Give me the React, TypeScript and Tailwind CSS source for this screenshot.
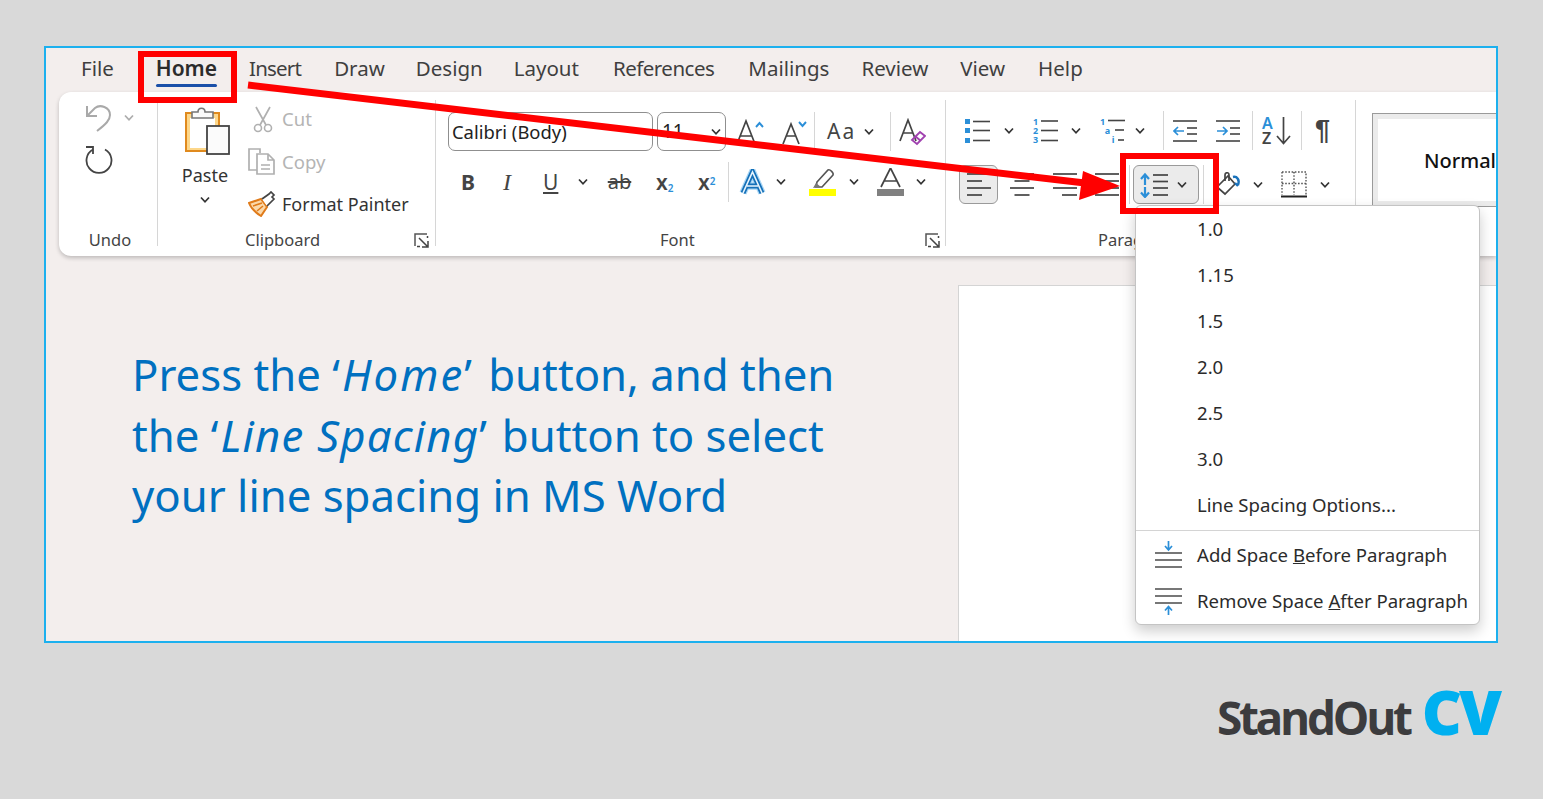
import React from "react";

const G = "#444444";
const B = "#2b8fd8";

function Chev({ ml = "" }: { ml?: string }) {
  return (
    <svg width="12" height="8" viewBox="0 0 12 8" className={`shrink-0 ${ml}`}>
      <path d="M2 1.5 L6 5.8 L10 1.5" fill="none" stroke="#333" strokeWidth="1.7" />
    </svg>
  );
}

function Sep({ className = "" }: { className?: string }) {
  return <div className={`w-px bg-[#d6d6d6] shrink-0 ${className}`} />;
}

function Launcher() {
  return (
    <svg width="15" height="15" viewBox="0 0 15 15" className="shrink-0">
      <path d="M1 13 V1 H13" fill="none" stroke="#555" strokeWidth="1.5" />
      <path d="M14 14 L5 5 M14 8 V14 H8 M3 13.5 H6 M13.5 3 V5" fill="none" stroke="#444" strokeWidth="1.5" />
    </svg>
  );
}

function Lines({ w, x = 0, ys, stroke = G, sw = 1.6 }: { w: number; x?: number; ys: number[]; stroke?: string; sw?: number }) {
  return (
    <>
      {ys.map((y) => (
        <path key={y} d={`M${x} ${y} H${x + w}`} stroke={stroke} strokeWidth={sw} fill="none" />
      ))}
    </>
  );
}

function Bullets({ ml }: { ml: string }) {
  return (
    <svg width="25" height="26" viewBox="0 0 25 26" className={`shrink-0 ${ml}`}>
      <rect x="0" y="1" width="5" height="5" fill={B} />
      <rect x="0" y="10" width="5" height="5" fill={B} />
      <rect x="0" y="20" width="5" height="5" fill={B} />
      <Lines w={17} x={8} ys={[3.5, 12.5, 22.5]} />
    </svg>
  );
}

function Stack({ text, lines, ml }: { text: string; lines: [number, number, number][]; ml: string }) {
  return (
    <div className={`relative shrink-0 w-[25px] h-[28px] ${ml}`}>
      <div className="whitespace-pre text-[9px] leading-[9.3px] font-bold text-[#2b8fd8]">{text}</div>
      <svg width="25" height="28" viewBox="0 0 25 28" className="absolute left-0 top-0">
        {lines.map(([x, l, y]) => (
          <path key={y} d={`M${x} ${y} H${x + l}`} stroke={G} strokeWidth="1.6" fill="none" />
        ))}
      </svg>
    </div>
  );
}

function Indent({ ml, out }: { ml: string; out?: boolean }) {
  return (
    <svg width="25" height="26" viewBox="0 0 25 26" className={`shrink-0 ${ml}`}>
      <Lines w={24} ys={[3, 23]} />
      <Lines w={10} x={14} ys={[10, 16]} />
      {out ? (
        <path d="M11 13 H1 M5 9 L1 13 L5 17" stroke={B} strokeWidth="1.7" fill="none" />
      ) : (
        <path d="M1 13 H11 M7 9 L11 13 L7 17" stroke={B} strokeWidth="1.7" fill="none" />
      )}
    </svg>
  );
}

function Sort({ ml }: { ml: string }) {
  return (
    <div className={`flex items-center shrink-0 w-[29px] h-[30px] ${ml}`}>
      <div className="flex flex-col w-[14px] text-[16px] leading-[15px] font-semibold">
        <span className="text-[#2b8fd8]">A</span>
        <span className="text-[#444]">Z</span>
      </div>
      <svg width="15" height="30" viewBox="0 0 15 30" className="shrink-0">
        <path d="M7.5 1 V27 M1 20 L7.5 27.5 L14 20" stroke={G} strokeWidth="1.7" fill="none" />
      </svg>
    </div>
  );
}

function Align({ kind, ml = "" }: { kind: "l" | "c" | "r" | "j"; ml?: string }) {
  const rows = [
    { l: 24, s: 0 },
    { l: 15, s: 1 },
    { l: 24, s: 2 },
    { l: 15, s: 3 },
  ];
  return (
    <svg width="24" height="25" viewBox="0 0 24 25" className={`shrink-0 ${ml}`}>
      {rows.map((r) => {
        const len = kind === "j" ? 24 : r.l;
        const x = kind === "l" || kind === "j" ? 0 : kind === "c" ? (24 - len) / 2 : 24 - len;
        const y = 2 + r.s * 7;
        return <path key={r.s} d={`M${x} ${y} H${x + len}`} stroke={G} strokeWidth="1.7" fill="none" />;
      })}
    </svg>
  );
}

function LineSpacing() {
  return (
    <svg width="29" height="26" viewBox="0 0 29 26" className="shrink-0">
      <path d="M6 13 V2.5 M2 7 L6 2.5 L10 7 M6 15 V25 M2 20.5 L6 25 L10 20.5" stroke={B} strokeWidth="2.2" fill="none" />
      <Lines w={15} x={14} ys={[3, 9.5, 16, 23]} sw={1.7} />
    </svg>
  );
}

function Menu1() {
  return (
    <svg width="27" height="28" viewBox="0 0 27 28" className="shrink-0">
      <path d="M13.5 0 V8 M10 5 L13.5 9 L17 5" stroke={B} strokeWidth="1.7" fill="none" />
      <Lines w={27} ys={[12, 19, 26]} stroke="#555" sw={1.6} />
    </svg>
  );
}

function Menu2() {
  return (
    <svg width="27" height="28" viewBox="0 0 27 28" className="shrink-0">
      <Lines w={27} ys={[2, 9, 16]} stroke="#555" sw={1.6} />
      <path d="M13.5 28 V20 M10 23.5 L13.5 19.5 L17 23.5" stroke={B} strokeWidth="1.7" fill="none" />
    </svg>
  );
}

function UndoIcon() {
  return (
    <svg width="26" height="28" viewBox="0 0 26 28" className="shrink-0">
      <path d="M1 2 V12 H11 M1 12 L9 4 C14 0 24 3 24 11 C24 16 20 20 11 27" fill="none" stroke="#a9a9a9" strokeWidth="2" />
    </svg>
  );
}

function RedoIcon() {
  return (
    <svg width="28" height="28" viewBox="0 0 28 28" className="shrink-0">
      <path d="M8 3.5 A12.5 12.5 0 1 0 20 3.5" fill="none" stroke={G} strokeWidth="1.8" />
      <path d="M1 1 H8 V8" fill="none" stroke={G} strokeWidth="1.8" />
    </svg>
  );
}

function PasteIcon() {
  return (
    <svg width="47" height="49" viewBox="0 0 47 49" className="shrink-0 ml-[3px]">
      <rect x="3" y="7" width="33" height="38" fill="#fdd78a" stroke="#e08a1e" strokeWidth="2" />
      <rect x="7" y="12" width="25" height="30" fill="#ffffff" />
      <path d="M9 12 V6 H15 C15 1 22 1 22 6 H30 V12 Z" fill="#fafafa" stroke="#777" strokeWidth="1.6" />
      <rect x="24" y="20" width="22" height="28" fill="#fbfbfb" stroke="#444" strokeWidth="1.8" />
    </svg>
  );
}

function CutIcon() {
  return (
    <svg width="20" height="27" viewBox="0 0 20 27" className="shrink-0">
      <path d="M3 1 L13 19 M17 1 L7 19" stroke="#b0b0b0" strokeWidth="1.7" fill="none" />
      <circle cx="5" cy="22" r="3.5" fill="none" stroke="#b0b0b0" strokeWidth="1.6" />
      <circle cx="15" cy="22" r="3.5" fill="none" stroke="#b0b0b0" strokeWidth="1.6" />
    </svg>
  );
}

function CopyIcon() {
  return (
    <svg width="27" height="27" viewBox="0 0 27 27" className="shrink-0">
      <path d="M9 22 H1 V1 H12 V5" fill="#fff" stroke="#b0b0b0" strokeWidth="1.7" />
      <path d="M9 6 H20 L26 12 V26 H9 Z M20 6 V12 H26 M13 17 H22 M13 21 H22" fill="#fff" stroke="#b0b0b0" strokeWidth="1.7" />
    </svg>
  );
}

function PainterIcon() {
  return (
    <svg width="28" height="26" viewBox="0 0 28 26" className="shrink-0">
      <path d="M1 12 L13 8 L19 16 L13 25 C8 22 3 17 1 12 Z" fill="#fbd9ab" stroke="#e07b1a" strokeWidth="2" />
      <path d="M5 15 L14 12 M9 20 L15 15" stroke="#e07b1a" strokeWidth="1.6" />
      <path d="M14 8 L21 3 L23 1 L26 4 L24 6 L26 8 L19 15" fill="#fff" stroke="#444" strokeWidth="1.7" />
    </svg>
  );
}

function GrowIcon({ ml, up }: { ml: string; up?: boolean }) {
  return (
    <svg width={up ? 28 : 25} height="26" viewBox={up ? "0 0 28 26" : "0 0 25 26"} className={`shrink-0 ${ml}`}>
      <path d={up ? "M1 25 L10 2 L19 25 M4.5 17 H15.5" : "M1 25 L9 5 L17 25 M4.5 17 H13.5"} fill="none" stroke="#444" strokeWidth="1.7" />
      {up ? (
        <path d="M20 8 L23.5 4 L27 8" fill="none" stroke={B} strokeWidth="1.9" />
      ) : (
        <path d="M17 3 L20.5 7 L24 3" fill="none" stroke={B} strokeWidth="1.9" />
      )}
    </svg>
  );
}

function ClearIcon({ ml }: { ml: string }) {
  return (
    <svg width="27" height="28" viewBox="0 0 27 28" className={`shrink-0 ${ml}`}>
      <path d="M1 23 L9 2 L17 23 M4 15 H14" fill="none" stroke="#444" strokeWidth="1.7" />
      <path d="M13 22 L21 14 L26 18 L18 26 Z M16.5 18.5 L22 23" fill="none" stroke="#a142b0" strokeWidth="1.9" />
    </svg>
  );
}

function TextEffect({ ml }: { ml: string }) {
  const d = "M4 24 L13.5 3 L23 24 M8 17 H19";
  return (
    <svg width="27" height="27" viewBox="0 0 27 27" className={`shrink-0 ${ml}`}>
      <path d={d} fill="none" stroke="#a9d6f5" strokeWidth="7.5" />
      <path d={d} fill="none" stroke="#1570b8" strokeWidth="5" />
      <path d={d} fill="none" stroke="#e9f5fd" strokeWidth="1.6" />
    </svg>
  );
}

function Highlight({ ml }: { ml: string }) {
  return (
    <svg width="27" height="28" viewBox="0 0 27 28" className={`shrink-0 ${ml}`}>
      <path d="M8 14 L19 2 C21 1 25 5 24 7 L13 19 L7 19 Z" fill="#fff" stroke="#555" strokeWidth="1.6" />
      <path d="M7 15 L12 19 L4 20 Z" fill="#777" />
      <rect x="0" y="21" width="27" height="7" fill="#ffff00" />
    </svg>
  );
}

function FontColor({ ml }: { ml: string }) {
  return (
    <svg width="27" height="28" viewBox="0 0 27 28" className={`shrink-0 ${ml}`}>
      <path d="M4 19 L13.5 0 L23 19 M7.5 13 H19.5" fill="none" stroke="#444" strokeWidth="1.7" />
      <rect x="0" y="21" width="27" height="7" fill="#808080" />
    </svg>
  );
}

function Shade({ ml }: { ml: string }) {
  return (
    <svg width="25" height="26" viewBox="0 0 25 26" className={`shrink-0 ${ml}`}>
      <path d="M1 15 L12 4 L19 12 L9 22 Z" fill="#fff" stroke="#444" strokeWidth="1.7" />
      <path d="M9 9 V3 C9 0 13 0 13 3 V9" fill="none" stroke="#444" strokeWidth="1.7" />
      <path d="M17 5 C21 4 24 8 22 13 M22 14 L19 11" fill="none" stroke="#1a72bb" strokeWidth="2.4" />
    </svg>
  );
}

function Borders({ ml }: { ml: string }) {
  return (
    <svg width="26" height="27" viewBox="0 0 26 27" className={`shrink-0 ${ml}`}>
      <path d="M1 1 H25 V24 M1 1 V24 M13 1 V24 M1 12.5 H25" fill="none" stroke="#555" strokeWidth="1.4" strokeDasharray="1.6 1.6" />
      <path d="M0 25.5 H26" stroke="#222" strokeWidth="2" />
    </svg>
  );
}

const menuRows = ["1.0", "1.15", "1.5", "2.0", "2.5", "3.0", "Line Spacing Options..."];
const tabs: [string, string][] = [
  ["File", "ml-[35px]"],
  ["Home", "ml-[42px] text-[21px] font-semibold text-[#2b2b2b]"],
  ["Insert", "ml-[32px] tracking-[-0.8px]"],
  ["Draw", "ml-[33px]"],
  ["Design", "ml-[31px]"],
  ["Layout", "ml-[31px]"],
  ["References", "ml-[34px] tracking-[-0.5px]"],
  ["Mailings", "ml-[34px]"],
  ["Review", "ml-[32px]"],
  ["View", "ml-[32px]"],
  ["Help", "ml-[33px]"],
];

export default function App() {
  return (
    <div className="relative w-[1543px] h-[799px] overflow-hidden bg-[#d9d9d9] pt-[46px] pl-[44px] font-['Noto_Sans',sans-serif] text-[#333333]">
      <div className="relative flex flex-col w-[1454px] h-[597px] border-2 border-[#1cb0ee] bg-[#f3eeed] overflow-hidden">
        {/* tabs */}
        <div className="flex items-baseline h-[44px] pt-[5px] text-[20.5px] leading-[30px] text-[#3f3f3f] shrink-0">
          {tabs.map(([t, c]) => (
            <span key={t} className={`relative ${c}`}>
              {t}
              {t === "Home" && <span className="absolute left-0 right-0 bottom-[-4px] h-[3px] rounded-full bg-[#1a4fa8]" />}
            </span>
          ))}
        </div>

        {/* ribbon */}
        <div className="flex h-[164px] ml-[13px] shrink-0 bg-white rounded-l-[12px] shadow-[0_2px_4px_rgba(0,0,0,0.22)] text-[#333333]">
          {/* Undo */}
          <div className="flex flex-col w-[98px] shrink-0 pt-[12px] pb-[4px]">
            <div className="flex items-center ml-[27px]">
              <UndoIcon />
              <Chev ml="ml-[11px] opacity-40" />
            </div>
            <div className="ml-[26px] mt-[14px]"><RedoIcon /></div>
            <div className="mt-auto pl-[4px] text-center text-[16.5px] leading-[24px] text-[#444]">Undo</div>
          </div>
          <Sep className="mt-[8px] mb-[10px]" />

          {/* Clipboard */}
          <div className="flex flex-col w-[277px] shrink-0 pb-[4px]">
            <div className="flex">
              <div className="flex flex-col items-center w-[66px] ml-[14px] pt-[14px]">
                <PasteIcon />
                <span className="text-[18px] leading-[24px] mt-[8px]">Paste</span>
                <Chev ml="mt-[9px]" />
              </div>
              <div className="flex flex-col ml-[10px] pt-[6px]">
                <div className="flex items-center h-[42px] text-[18.5px] text-[#b4b4b4]">
                  <div className="w-[34px] pl-[5px]"><CutIcon /></div>Cut
                </div>
                <div className="flex items-center h-[43px] text-[18.5px] text-[#b4b4b4]">
                  <div className="w-[34px]"><CopyIcon /></div>Copy
                </div>
                <div className="flex items-center h-[42px] text-[18px] text-[#333]">
                  <div className="w-[34px]"><PainterIcon /></div>Format Painter
                </div>
              </div>
            </div>
            <div className="mt-auto flex items-center text-[16.5px] leading-[24px] text-[#444]">
              <span className="ml-[87px]">Clipboard</span>
              <span className="ml-auto mr-[6px]"><Launcher /></span>
            </div>
          </div>
          <Sep className="mt-[8px] mb-[10px]" />

          {/* Font */}
          <div className="flex flex-col w-[509px] shrink-0 pt-[20px] pb-[4px]">
            <div className="flex items-center h-[39px]">
              <div className="flex items-center w-[205px] h-[39px] ml-[12px] shrink-0 rounded-[7px] border border-[#8f8f8f] pl-[3px] text-[18.4px] text-[#222]">
                Calibri (Body)
              </div>
              <div className="flex items-center justify-between w-[69px] h-[39px] ml-[4px] shrink-0 rounded-[7px] border border-[#8f8f8f] pl-[4px] pr-[3px] text-[19px] text-[#222]">
                11 <Chev />
              </div>
              <GrowIcon up ml="ml-[10px]" />
              <GrowIcon ml="ml-[18px]" />
              <Sep className="ml-[7px] h-[39px]" />
              <span className="ml-[12px] text-[21px] leading-none tracking-[2px] text-[#444]">Aa</span>
              <Chev ml="ml-[7px]" />
              <Sep className="ml-[15px] h-[39px]" />
              <ClearIcon ml="ml-[8px]" />
            </div>
            <div className="flex items-center h-[40px] mt-[11px] text-[#444]">
              <span className="ml-[25px] w-[12px] text-[21px] font-bold leading-none">B</span>
              <span className="ml-[30px] w-[12px] text-[24px] italic leading-none font-['Liberation_Serif',serif]">I</span>
              <span className="ml-[28px] w-[17px] text-[21px] leading-[24px] underline underline-offset-2">U</span>
              <Chev ml="ml-[17px]" />
              <span className="ml-[17px] w-[27px] text-[20px] leading-none line-through text-center">ab</span>
              <span className="ml-[23px] w-[18px] text-[21px] font-semibold leading-none whitespace-nowrap">x<sub className="text-[10px] text-[#2b8fd8]">2</sub></span>
              <span className="ml-[24px] w-[19px] text-[21px] font-semibold leading-none whitespace-nowrap">x<sup className="text-[10px] text-[#2b8fd8]">2</sup></span>
              <Sep className="ml-[11px] h-[40px]" />
              <TextEffect ml="ml-[10px]" />
              <Chev ml="ml-[9px]" />
              <Highlight ml="ml-[22px]" />
              <Chev ml="ml-[12px]" />
              <FontColor ml="ml-[17px]" />
              <Chev ml="ml-[11px]" />
            </div>
            <div className="mt-auto flex items-center text-[16.5px] leading-[24px] text-[#444]">
              <span className="ml-[224px]">Font</span>
              <span className="ml-auto mr-[5px]"><Launcher /></span>
            </div>
          </div>
          <Sep className="mt-[8px] mb-[10px]" />

          {/* Paragraph */}
          <div className="flex flex-col w-[409px] shrink-0 pt-[19px] pb-[4px]">
            <div className="flex items-center h-[39px]">
              <Bullets ml="ml-[19px]" />
              <Chev ml="ml-[13px]" />
              <Stack ml="ml-[18px]" text={"1\n2\n3"} lines={[[8, 17, 4], [8, 17, 13.5], [8, 17, 23.5]]} />
              <Chev ml="ml-[12px]" />
              <Stack ml="ml-[18px]" text={"1\n  a\n     i"} lines={[[8, 17, 3.5], [15, 9, 13], [18, 6, 23]]} />
              <Chev ml="ml-[9px]" />
              <Sep className="ml-[17px] h-[39px]" />
              <Indent out ml="ml-[9px]" />
              <Indent ml="ml-[18px]" />
              <Sep className="ml-[11px] h-[39px]" />
              <Sort ml="ml-[9px]" />
              <Sep className="ml-[10px] h-[39px]" />
              <span className="ml-[13px] w-[18px] text-[27px] font-bold leading-none text-[#444] font-['Liberation_Sans',sans-serif]">¶</span>
            </div>
            <div className="flex items-center h-[39px] mt-[15px]">
              <div className="flex items-center justify-center w-[39px] h-[39px] ml-[13px] shrink-0 rounded-[6px] border border-[#9a9a9a] bg-[#ebebeb]">
                <Align kind="l" />
              </div>
              <Align kind="c" ml="ml-[12px]" />
              <Align kind="r" ml="ml-[19px]" />
              <Align kind="j" ml="ml-[18px]" />
              <Sep className="ml-[10px] h-[39px]" />
              <div className="flex items-center w-[66px] h-[39px] ml-[3px] pl-[5px] shrink-0 rounded-[6px] border border-[#9a9a9a] bg-[#ebebeb]">
                <LineSpacing />
                <Chev ml="ml-[8px]" />
              </div>
              <Sep className="ml-[4px] h-[39px]" />
              <Shade ml="ml-[12px]" />
              <Chev ml="ml-[11px]" />
              <Borders ml="ml-[17px]" />
              <Chev ml="ml-[12px]" />
            </div>
            <div className="mt-auto text-[16.5px] leading-[24px] text-[#444] ml-[152px]">Paragraph</div>
          </div>
          <Sep className="mt-[8px] mb-[10px]" />

          {/* Styles */}
          <div className="w-[200px] h-[94px] ml-[16px] mt-[21px] shrink-0 border border-[#9a9a9a] bg-white">
            <div className="h-full border-[5px] border-[#ebebeb] flex items-center pt-[2px] pl-[46px] text-[20px] font-medium text-[#111]">
              Normal
            </div>
          </div>
        </div>

        {/* document area */}
        <div className="flex flex-1 min-h-0">
          <div className="pl-[86px] pt-[88px] text-[43.7px] leading-[60.5px] text-[#0070c0] whitespace-nowrap">
            <div>Press the <span className="tracking-[2px]">‘</span><i className="tracking-[2px]">Home</i><span className="tracking-[5px]">’</span> button, and then</div>
            <div>the <span className="tracking-[2px]">‘</span><i className="tracking-[1.2px]">Line Spacing</i><span className="tracking-[3.5px]">’</span> button to select</div>
            <div>your line spacing in MS Word</div>
          </div>
          <div className="ml-auto w-[538px] mt-[29px] bg-white border-l border-t border-[#d4d4d4]" />
        </div>

        {/* line spacing menu */}
        <div className="absolute left-[1089px] top-[157px] w-[345px] h-[420px] bg-white rounded-[6px] border border-[#c4c4c4] shadow-[0_6px_14px_rgba(0,0,0,0.2)] text-[18.6px] text-[#2b2b2b]">
          {menuRows.map((r) => (
            <div key={r} className="flex items-center h-[46px] pl-[61px]">{r}</div>
          ))}
          <div className="h-px bg-[#d4d4d4] mt-[2px] mb-[1px]" />
          <div className="flex items-center h-[46px] pl-[19px]">
            <Menu1 />
            <span className="ml-[15px]">Add Space <u>B</u>efore Paragraph</span>
          </div>
          <div className="flex items-center h-[46px] pl-[19px]">
            <Menu2 />
            <span className="ml-[15px] whitespace-nowrap">Remove Space <u>A</u>fter Paragraph</span>
          </div>
        </div>
      </div>

      {/* logo */}
      <div className="flex items-baseline justify-end w-[1455px] mt-[37px] font-['Open_Sans',sans-serif] font-bold leading-none">
        <span className="text-[46px] tracking-[-3.3px] text-[#3c3c3e]">StandOut</span>
        <span className="ml-[12px] text-[62px] font-extrabold tracking-[-3px] text-[#00b0f0]">CV</span>
      </div>

      {/* red annotations */}
      <div className="absolute left-[138px] top-[51px] w-[99px] h-[52px] border-[6px] border-[#ff0000]" />
      <div className="absolute left-[1120px] top-[153px] w-[99px] h-[61px] border-[6px] border-[#ff0000]" />
      <svg width="1543" height="799" viewBox="0 0 1543 799" className="absolute left-0 top-0 pointer-events-none">
        <path d="M248 85 L1085 183" stroke="#ff0000" strokeWidth="7" fill="none" />
        <path d="M1083 171 L1120 186 L1079 200 Z" fill="#ff0000" />
      </svg>
    </div>
  );
}
